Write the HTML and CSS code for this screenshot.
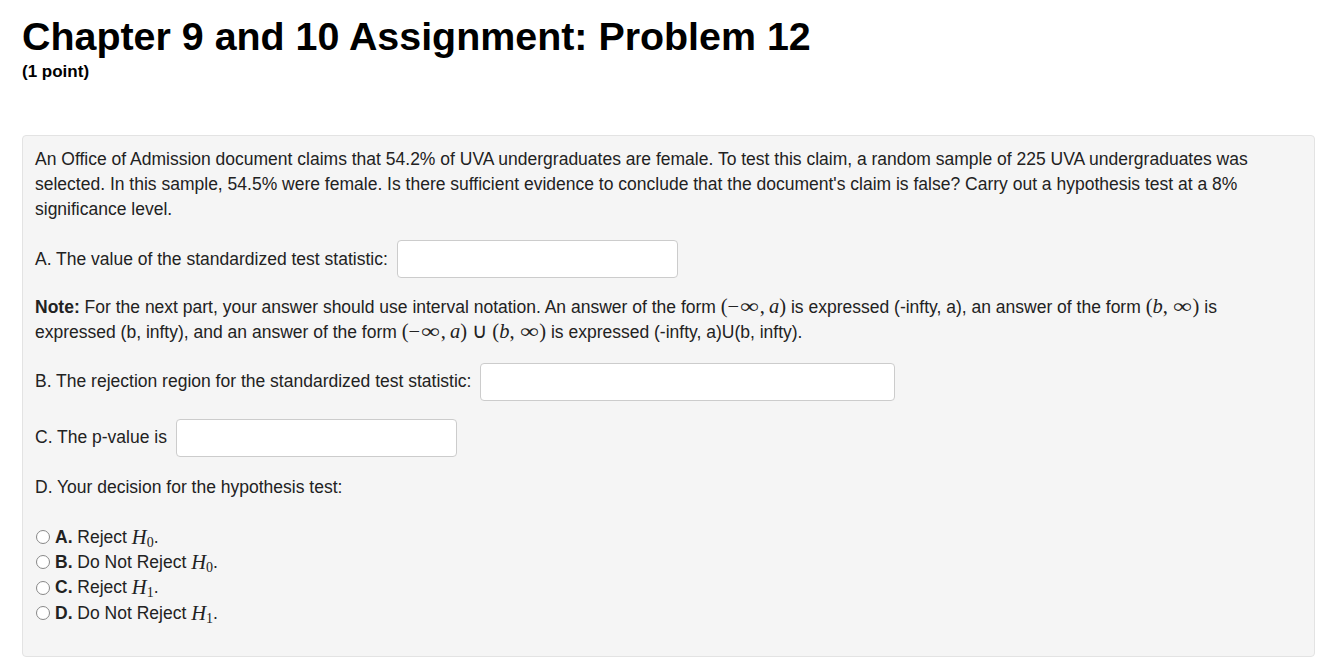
FILE: index.html
```html
<!DOCTYPE html>
<html>
<head>
<meta charset="utf-8">
<link rel="stylesheet" href="styles.css">
</head>
<body>
<h1 class="title">Chapter 9 and 10 Assignment: Problem 12</h1>
<div class="points">(1 point)</div>
<div class="problem">
  <p class="para">An Office of Admission document claims that 54.2% of UVA undergraduates are female. To test this claim, a random sample of 225 UVA undergraduates was selected. In this sample, 54.5% were female. Is there sufficient evidence to conclude that the document's claim is false? Carry out a hypothesis test at a 8% significance level.</p>
  <div class="row">A. The value of the standardized test statistic: <span class="field w281"></span></div>
  <p class="para note"><b>Note:</b> For the next part, your answer should use interval notation. An answer of the form <span class="m">(−<span class="inf">∞</span>,&thinsp;<i>a</i>)</span> is expressed (-infty, a), an answer of the form <span class="m">(<i>b</i>,&thinsp;<span class="inf">∞</span>)</span> is expressed (b, infty), and an answer of the form <span class="m">(−<span class="inf">∞</span>,&thinsp;<i>a</i>) ∪ (<i>b</i>,&thinsp;<span class="inf">∞</span>)</span> is expressed (-infty, a)U(b, infty).</p>
  <div class="row">B. The rejection region for the standardized test statistic: <span class="field w415"></span></div>
  <div class="row">C. The p-value is <span class="field w281"></span></div>
  <p class="para">D. Your decision for the hypothesis test:</p>
  <ul class="choices">
    <li><span class="radio"></span><b>A.</b> Reject <span class="m"><i>H</i><sub>0</sub></span>.</li>
    <li><span class="radio"></span><b>B.</b> Do Not Reject <span class="m"><i>H</i><sub>0</sub></span>.</li>
    <li><span class="radio"></span><b>C.</b> Reject <span class="m"><i>H</i><sub>1</sub></span>.</li>
    <li><span class="radio"></span><b>D.</b> Do Not Reject <span class="m"><i>H</i><sub>1</sub></span>.</li>
  </ul>
</div>
</body>
</html>
```
FILE: styles.css
```css
html, body {
  margin: 0;
  padding: 0;
  background: #fff;
}
body {
  font-family: "Liberation Sans", Arial, sans-serif;
  color: #222;
  padding: 0 11px 0 22px;
}
.title {
  font-size: 39.4px;
  font-weight: bold;
  color: #000;
  margin: 0;
  padding-top: 14px;
  line-height: 44px;
}
.points {
  font-size: 17px;
  font-weight: bold;
  color: #000;
  margin-top: 5px;
  line-height: 18px;
}
.problem {
  margin-top: 54px;
  background: #f5f5f5;
  border: 1px solid #e3e3e3;
  border-radius: 4px;
  padding: 11px 12px 30px 12px;
  font-size: 17.5px;
  line-height: 25px;
  display: flex;
  flex-direction: column;
  gap: 18px;
}
.para {
  margin: 0;
}
.note {
  margin-top: -1.5px;
}
.row {
  display: flex;
  align-items: center;
  white-space: pre;
}
.field {
  display: inline-block;
  height: 36px;
  background: #fff;
  border: 1px solid #ccc;
  border-radius: 4px;
  margin-left: 4px;
  box-sizing: content-box;
}
.w281 { width: 279px; }
.w415 { width: 413px; }
.m {
  font-family: "Liberation Serif", "Times New Roman", serif;
  font-size: 20.5px;
  line-height: 1;
}
.m i {
  font-style: italic;
}
.inf {
  display: inline-block;
  transform: scaleX(1.3);
  margin: 0 3px;
}
.m sub {
  font-size: 14px;
  vertical-align: -3px;
  line-height: 0;
}
.choices {
  list-style: none;
  margin: 7px 0 0 0;
  padding: 0;
}
.choices li {
  display: flex;
  align-items: center;
  height: 25.3px;
  white-space: pre;
}
.radio {
  display: inline-block;
  width: 12px;
  height: 12px;
  border: 1px solid #888;
  border-radius: 50%;
  background: #fff;
  margin: 0 5px 0 1px;
}
```
